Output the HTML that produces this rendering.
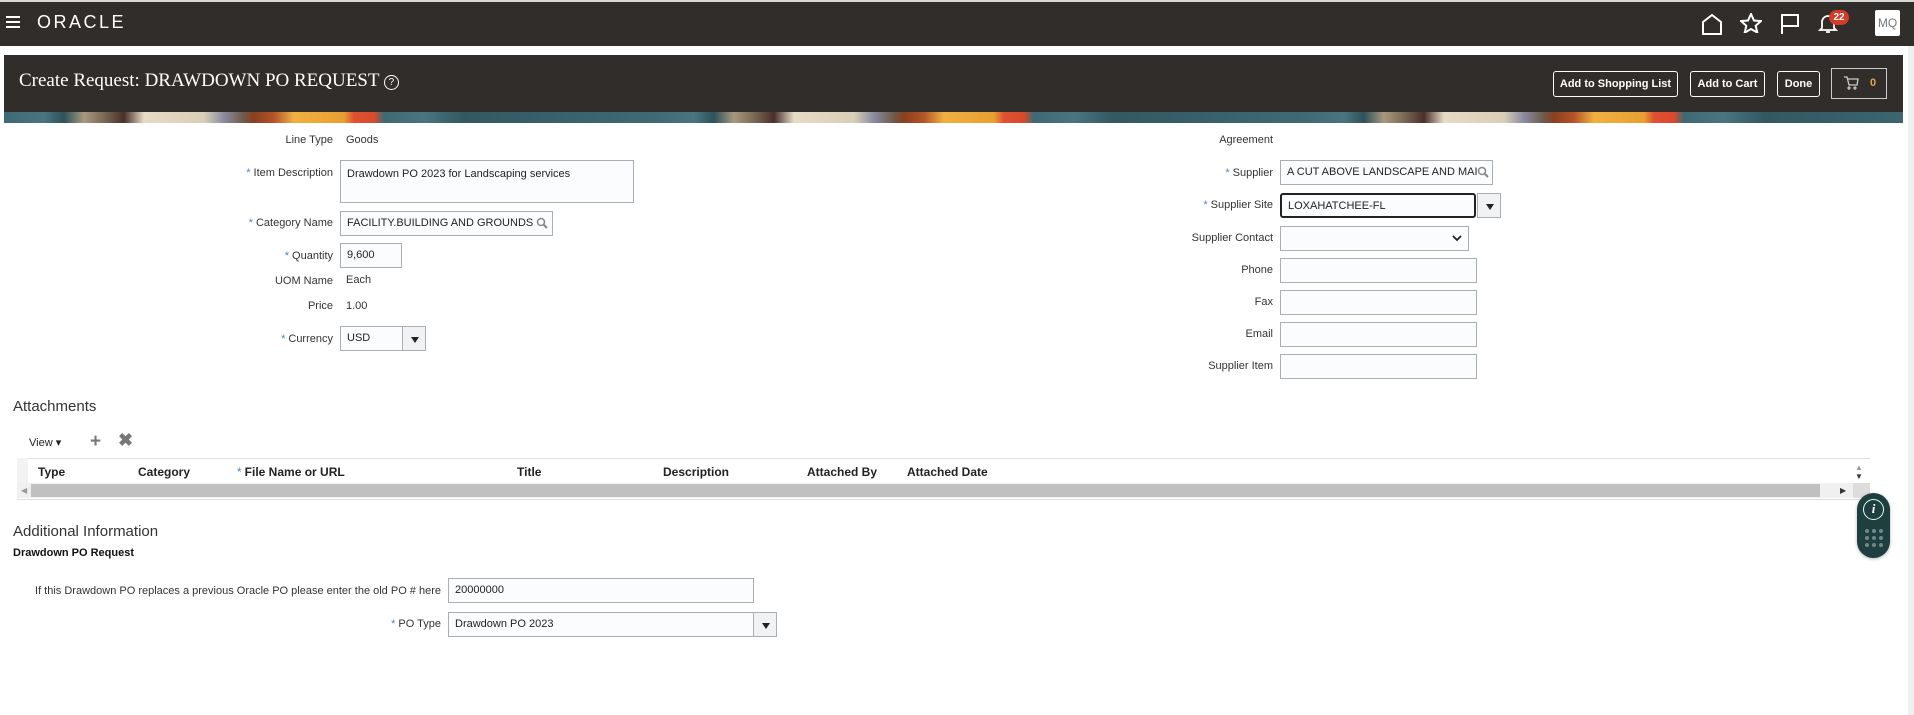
<!DOCTYPE html>
<html><head><meta charset="utf-8"><style>
*{box-sizing:border-box;margin:0;padding:0}
body{width:1914px;height:715px;background:#fff;font-family:"Liberation Sans",Arial,sans-serif;font-size:11px;color:#333;position:relative;overflow:hidden}
.a{position:absolute}
.top{left:0;top:0;width:1914px;height:46px;background:#312d2a;border-top:2px solid #d8d8d8}
.hdr{left:4px;top:55px;width:1899px;height:57px;background:#312d2a}
.stripe{left:4px;top:112px;width:1899px;height:11px;background:repeating-linear-gradient(90deg,#3f6a74 0,#4a7580 40px,#2f525a 60px,#a8987e 80px,#7a6a55 100px,#4b2e2a 120px,#e6dcc6 140px,#d9cfb7 200px,#8a8aa0 220px,#6e5a49 240px,#8a3f1e 250px,#b5542a 270px,#f0b040 290px,#e8a030 340px,#e05030 350px,#d94a2c 370px,#3f6a74 380px,#4a7580 420px,#335860 460px,#3f6a74 650px)}
.btn{border:1px solid #fff;border-radius:3px;color:#fff;font-weight:bold;font-size:11px;height:26px;line-height:24px;text-align:center;top:71px}
.lbl{text-align:right;color:#333;font-size:11px}
.req{color:#4f84c4;margin-right:3px}
.val{font-size:11px;color:#333}
.in{border:1px solid #a9aeb3;background:#fbfcfd;height:25px;font-size:11px;padding:0 6px;line-height:23px;color:#222}
.dd{border:1px solid #a9aeb3;background:#f1f2f3;height:25px;width:24px}
.dd:after{content:"";position:absolute;left:8px;top:10px;border:4px solid transparent;border-top:6px solid #222}
.th{font-weight:bold;font-size:12px;color:#222;top:465px}
</style></head><body>
<div class="a top"></div>
<div class="a" style="left:6px;top:16px;width:14px;height:2px;background:#fff;box-shadow:0 5px 0 #fff,0 10px 0 #fff"></div>
<div class="a" style="left:37px;top:12px;color:#fff;font-size:18px;letter-spacing:2.5px;font-weight:normal">ORACLE</div>
<svg class="a" style="left:1700px;top:13px" width="24" height="22" viewBox="0 0 24 22"><path d="M3 21V9L12 2l9 7v12z" fill="none" stroke="#fff" stroke-width="2"/></svg>
<svg class="a" style="left:1740px;top:13px" width="22" height="20" viewBox="0 0 22 20"><path d="M11 1l3 6.5 7 .6-5.3 4.6 1.6 6.9L11 16l-6.3 3.6 1.6-6.9L1 8.1l7-.6z" fill="none" stroke="#fff" stroke-width="2"/></svg>
<svg class="a" style="left:1780px;top:13px" width="20" height="22" viewBox="0 0 20 22"><path d="M2 21V2h16v11H2" fill="none" stroke="#fff" stroke-width="2"/></svg>
<svg class="a" style="left:1818px;top:13px" width="20" height="22" viewBox="0 0 20 22"><path d="M4 15V9a6 6 0 0112 0v6l2 2H2z M8 19h4" fill="none" stroke="#fff" stroke-width="1.8"/></svg>
<div class="a" style="left:1829px;top:10px;width:20px;height:15px;background:#d63b25;border-radius:8px;color:#fff;font-size:10px;font-weight:bold;text-align:center;line-height:15px">22</div>
<div class="a" style="left:1875px;top:10px;width:25px;height:26px;background:#fff;border-radius:2px;color:#777;font-size:12px;text-align:center;line-height:26px">MQ</div>
<div class="a hdr"></div>
<div class="a" style="left:19px;top:70px;color:#fff;font-family:'Liberation Serif',serif;font-size:19px">Create Request: DRAWDOWN PO REQUEST <span style="display:inline-block;width:15px;height:15px;border:1px solid #fff;border-radius:50%;font-size:10px;text-align:center;line-height:13px;font-family:'Liberation Sans',sans-serif;vertical-align:1px">?</span></div>
<div class="a btn" style="left:1553px;width:125px">Add to Shopping List</div>
<div class="a btn" style="left:1690px;width:75px">Add to Cart</div>
<div class="a btn" style="left:1777px;width:43px">Done</div>
<div class="a" style="left:1831px;top:68px;width:56px;height:31px;border:1px solid #c8ccd0;color:#e0a84c;font-weight:bold;font-size:11px;line-height:29px;padding-left:38px">0</div>
<svg class="a" style="left:1843px;top:76px" width="16" height="14" viewBox="0 0 16 14"><path d="M1 1h3l2 8h8l1-6H5M7 12a1 1 0 100 .1M13 12a1 1 0 100 .1" fill="none" stroke="#ccc" stroke-width="1.3"/></svg>
<div class="a stripe"></div>

<div class="a lbl" style="left:150px;width:183px;top:134px">Line Type</div><div class="a val" style="left:346px;top:134px">Goods</div>
<div class="a lbl" style="left:150px;width:183px;top:167px"><span class="req">*</span>Item Description</div>
<div class="a in" style="left:340px;top:160px;width:294px;height:43px;line-height:14px;padding-top:6px">Drawdown PO 2023 for Landscaping services</div>
<div class="a lbl" style="left:150px;width:183px;top:217px"><span class="req">*</span>Category Name</div>
<div class="a in" style="left:340px;top:211px;width:213px">FACILITY.BUILDING AND GROUNDS</div>
<svg class="a" style="left:536px;top:217px" width="12" height="12" viewBox="0 0 12 12"><circle cx="5" cy="5" r="3.5" fill="none" stroke="#888" stroke-width="1.5"/><path d="M7.5 7.5L11 11" stroke="#888" stroke-width="2"/></svg>
<div class="a lbl" style="left:150px;width:183px;top:250px"><span class="req">*</span>Quantity</div>
<div class="a in" style="left:340px;top:243px;width:62px">9,600</div>
<div class="a lbl" style="left:150px;width:183px;top:275px">UOM Name</div><div class="a val" style="left:346px;top:274px">Each</div>
<div class="a lbl" style="left:150px;width:183px;top:300px">Price</div><div class="a val" style="left:346px;top:300px">1.00</div>
<div class="a lbl" style="left:150px;width:183px;top:333px"><span class="req">*</span>Currency</div>
<div class="a in" style="left:340px;top:326px;width:63px">USD</div><div class="a dd" style="left:402px;top:326px"></div>

<div class="a lbl" style="left:1100px;width:173px;top:134px">Agreement</div>
<div class="a lbl" style="left:1100px;width:173px;top:167px"><span class="req">*</span>Supplier</div>
<div class="a in" style="left:1280px;top:160px;width:213px;padding-right:20px;overflow:hidden;white-space:nowrap">A CUT ABOVE LANDSCAPE AND MAI</div>
<svg class="a" style="left:1477px;top:166px" width="12" height="12" viewBox="0 0 12 12"><circle cx="5" cy="5" r="3.5" fill="none" stroke="#888" stroke-width="1.5"/><path d="M7.5 7.5L11 11" stroke="#888" stroke-width="2"/></svg>
<div class="a lbl" style="left:1100px;width:173px;top:199px"><span class="req">*</span>Supplier Site</div>
<div class="a in" style="left:1280px;top:193px;width:196px;border:2px solid #222;border-radius:3px">LOXAHATCHEE-FL</div><div class="a dd" style="left:1477px;top:193px"></div>
<div class="a lbl" style="left:1100px;width:173px;top:232px">Supplier Contact</div>
<div class="a in" style="left:1280px;top:226px;width:189px"></div>
<svg class="a" style="left:1452px;top:235px" width="10" height="7" viewBox="0 0 10 7"><path d="M1 1l4 4 4-4" fill="none" stroke="#222" stroke-width="1.8"/></svg>
<div class="a lbl" style="left:1100px;width:173px;top:264px">Phone</div><div class="a in" style="left:1280px;top:258px;width:197px"></div>
<div class="a lbl" style="left:1100px;width:173px;top:296px">Fax</div><div class="a in" style="left:1280px;top:290px;width:197px"></div>
<div class="a lbl" style="left:1100px;width:173px;top:328px">Email</div><div class="a in" style="left:1280px;top:322px;width:197px"></div>
<div class="a lbl" style="left:1100px;width:173px;top:360px">Supplier Item</div><div class="a in" style="left:1280px;top:354px;width:197px"></div>

<div class="a" style="left:13px;top:398px;font-size:15px;color:#333">Attachments</div>
<div class="a" style="left:29px;top:436px;font-size:11px;color:#222">View &#9662;</div>
<div class="a" style="left:90px;top:431px;font-size:19px;color:#777;font-weight:bold">+</div>
<div class="a" style="left:118px;top:430px;font-size:18px;color:#777;font-weight:bold">&#10006;</div>
<div class="a" style="left:17px;top:458px;width:1853px;height:42px;border-top:1px solid #d6dfe6;border-bottom:1px solid #d6dfe6;background:#fff"></div>
<div class="a" style="left:17px;top:458px;width:11px;height:25px;background:#f3f3f3"></div>
<div class="a" style="left:17px;top:483px;width:1853px;height:15px;background:#f0f0f0"></div>
<div class="a" style="left:31px;top:484px;width:1789px;height:13px;background:#c0c0c0"></div>
<div class="a" style="left:1853px;top:483px;width:17px;height:15px;background:#ddd"></div>
<div class="a th" style="left:38px">Type</div>
<div class="a th" style="left:138px">Category</div>
<div class="a th" style="left:237px"><span class="req" style="font-weight:normal">*</span>File Name or URL</div>
<div class="a th" style="left:517px">Title</div>
<div class="a th" style="left:663px">Description</div>
<div class="a th" style="left:807px">Attached By</div>
<div class="a th" style="left:907px">Attached Date</div>
<div class="a" style="left:1855px;top:463px;font-size:8px;color:#999;line-height:9px">&#9650;<br><span style="color:#333">&#9660;</span></div>
<div class="a" style="left:1840px;top:486px;font-size:8px;color:#333">&#9654;</div>
<div class="a" style="left:21px;top:486px;font-size:8px;color:#999">&#9664;</div>

<div class="a" style="left:1857px;top:493px;width:33px;height:65px;background:#1e3e40;border-radius:17px;box-shadow:0 1px 3px rgba(0,0,0,.3)"></div>
<div class="a" style="left:1863px;top:499px;width:21px;height:21px;border:1.5px solid #dfe;border-radius:50%;color:#fff;font-family:'Liberation Serif',serif;font-style:italic;font-weight:bold;font-size:13px;text-align:center;line-height:18px">i</div>
<div class="a" style="left:1865px;top:529px;width:4px;height:4px;background:#6f8888;border-radius:50%;box-shadow:7px 0 #6f8888,14px 0 #6f8888,0 7px #6f8888,7px 7px #6f8888,14px 7px #6f8888,0 14px #6f8888,7px 14px #6f8888,14px 14px #6f8888"></div>

<div class="a" style="left:13px;top:523px;font-size:15px;color:#333">Additional Information</div>
<div class="a" style="left:13px;top:547px;font-size:11px;font-weight:bold;color:#111">Drawdown PO Request</div>
<div class="a lbl" style="left:0;width:441px;top:585px;white-space:nowrap">If this Drawdown PO replaces a previous Oracle PO please enter the old PO # here</div>
<div class="a in" style="left:448px;top:578px;width:306px">20000000</div>
<div class="a lbl" style="left:250px;width:191px;top:618px"><span class="req">*</span>PO Type</div>
<div class="a in" style="left:448px;top:612px;width:306px">Drawdown PO 2023</div><div class="a dd" style="left:753px;top:612px"></div>
<div class="a" style="left:1908px;top:46px;width:6px;height:669px;background:#f0f0f0"></div>
</body></html>
